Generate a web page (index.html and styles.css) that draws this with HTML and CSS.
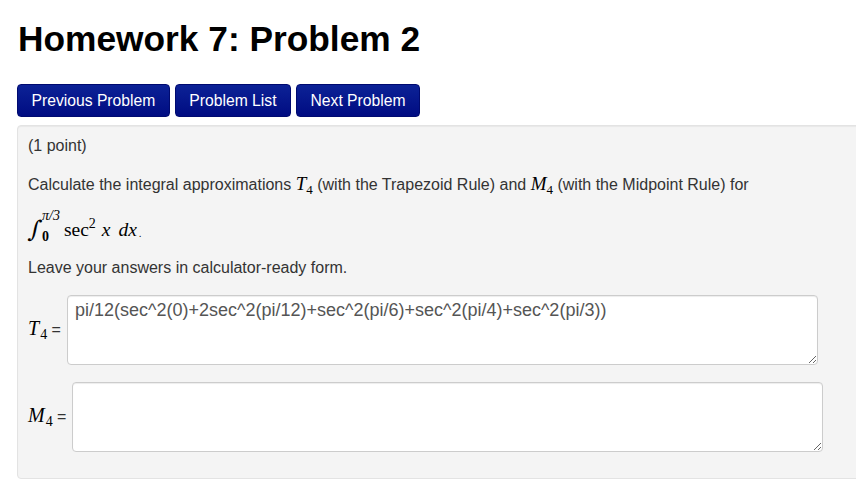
FILE: index.html
```html
<!DOCTYPE html>
<html>
<head>
<meta charset="utf-8">
<link rel="stylesheet" href="styles.css">
</head>
<body>
<div class="page">
  <h1 class="title">Homework 7: Problem 2</h1>
  <div class="nav">
    <a class="btn">Previous Problem</a>
    <a class="btn">Problem List</a>
    <a class="btn">Next Problem</a>
  </div>
  <div class="well">
    <p class="para">(1 point)</p>
    <p class="para">Calculate the integral approximations <span class="m"><i>T</i><sub>4</sub></span> (with the Trapezoid Rule) and <span class="m"><i>M</i><sub>4</sub></span> (with the Midpoint Rule) for</p>
    <div class="mathline"><span class="int">∫</span><span class="lims"><span class="up">π/3</span><span class="lo">0</span></span><span class="m sec">sec</span><span class="sq">2</span><i class="m x">x</i><i class="m dx">dx</i><span class="dot">.</span></div>
    <p class="para last">Leave your answers in calculator-ready form.</p>
    <div class="ans">
      <span class="lbl"><span class="m"><i>T</i><sub>4</sub></span> =</span>
      <textarea class="ta">pi/12(sec^2(0)+2sec^2(pi/12)+sec^2(pi/6)+sec^2(pi/4)+sec^2(pi/3))</textarea>
    </div>
    <div class="ans">
      <span class="lbl"><span class="m"><i>M</i><sub>4</sub></span> =</span>
      <textarea class="ta"></textarea>
    </div>
  </div>
</div>
</body>
</html>
```
FILE: styles.css
```css
html, body { margin: 0; padding: 0; background: #fff; }
body { font-family: "Liberation Sans", Arial, sans-serif; font-size: 16px; color: #333; overflow: hidden; }
.page { padding: 19px 0 0 17px; }
.title { margin: 0; font-size: 35.3px; line-height: 40px; font-weight: bold; color: #000; padding-left: 1px; }
.nav { display: flex; gap: 5px; margin-top: 25px; }
.btn {
  display: block; height: 33px; line-height: 31px; box-sizing: border-box;
  padding: 0 13.5px; color: #fff; font-size: 15.7px;
  background: linear-gradient(to bottom, #0c2296, #000c82);
  border: 1px solid #000a70; border-radius: 4px;
}
.well {
  margin-top: 8px; width: 860px; box-sizing: border-box;
  background: #f4f4f4; border: 1px solid #e3e3e3; border-radius: 4px;
  box-shadow: inset 0 1px 1px rgba(0,0,0,.05);
  padding: 10px 10px 26px 10px;
}
.para { margin: 0 0 19px 0; line-height: 20px; }
.para.last { margin-bottom: 17px; }
.m { font-family: "Liberation Serif", "DejaVu Serif", serif; font-size: 19px; color: #000; line-height: 0; }
.m i { font-style: italic; }
.m sub { font-size: 13px; vertical-align: -4px; font-style: normal; line-height: 0; }
.lbl .m { font-size: 20px; }
.lbl .m sub { font-size: 14px; margin-left: 1px; }
.mathline { display: flex; align-items: center; height: 28px; margin: 0 0 16px 0; color: #000; padding-left: 1px; }
.int { font-family: "DejaVu Serif", serif; font-size: 23px; line-height: 1; display: inline-block; transform: skewX(-10deg); margin-top: 2px; }
.lims { display: inline-flex; flex-direction: column; font-family: "Liberation Serif", serif; font-size: 14px; line-height: 12px; margin-left: 1px; }
.up { font-style: italic; position: relative; top: -6px; }
.lo { position: relative; top: 3px; font-weight: bold; }
.sec { margin-left: 4px; font-size: 19.5px; line-height: 1; position: relative; top: 2px; }
.sq { font-family: "Liberation Serif", serif; font-size: 14px; position: relative; top: -4px; margin-left: 0; }
.x { margin-left: 6px; font-style: italic; font-size: 19.5px; line-height: 1; position: relative; top: 2px; }
.dx { margin-left: 8px; font-style: italic; font-size: 19.5px; line-height: 1; position: relative; top: 2px; }
.dot { font-size: 10px; margin-left: 2px; position: relative; top: 5px; }
.ans { display: flex; align-items: center; }
.ans + .ans { margin-top: 17px; }
.lbl { white-space: pre; line-height: 20px; }
.ta {
  width: 751px; height: 70px; box-sizing: border-box;
  border: 1px solid #ccc; border-radius: 4px; background: #fff;
  box-shadow: inset 0 1px 1px rgba(0,0,0,.075);
  padding: 4px 7px; margin: 0 0 0 6px;
  font-family: "Liberation Sans", Arial, sans-serif; font-size: 18px; line-height: 20px; color: #555;
  resize: vertical;
}
```
